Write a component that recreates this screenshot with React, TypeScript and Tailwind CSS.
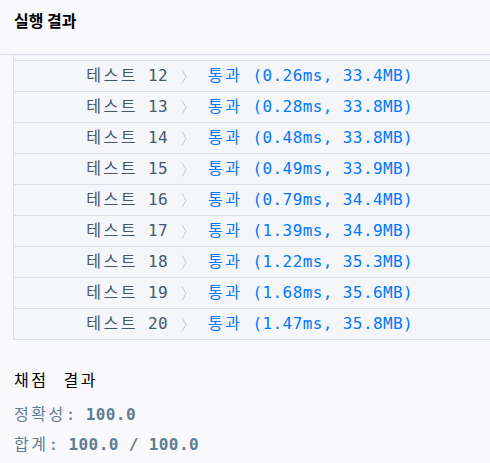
const rows = [
  { n: 12, t: "0.26ms", m: "33.4MB" },
  { n: 13, t: "0.28ms", m: "33.8MB" },
  { n: 14, t: "0.48ms", m: "33.8MB" },
  { n: 15, t: "0.49ms", m: "33.9MB" },
  { n: 16, t: "0.79ms", m: "34.4MB" },
  { n: 17, t: "1.39ms", m: "34.9MB" },
  { n: 18, t: "1.22ms", m: "35.3MB" },
  { n: 19, t: "1.68ms", m: "35.6MB" },
  { n: 20, t: "1.47ms", m: "35.8MB" },
];

const mono = "font-['DejaVu_Sans_Mono','Noto_Sans_CJK_KR',monospace]";

function Ko({ children }: { children: React.ReactNode }) {
  return <span className="tracking-[2.5px]">{children}</span>;
}

export default function App() {
  return (
    <div className="w-[490px] h-[463px] overflow-hidden bg-[#f9f9fc]">
      <div className="h-[55px] border-b border-[#d9dfe8] pl-[14px] pt-[8px]">
        <h2 className="text-[16px] font-bold text-black font-['Noto_Sans_CJK_KR',sans-serif] leading-[24px]">
          실행 결과
        </h2>
      </div>

      <div className={`ml-[13px] border-l border-b border-[#d9dfe8] bg-[#f5f6fa] pt-[5px] ${mono} text-[16px] tracking-[0.4px]`}>
        {rows.map((r) => (
          <div key={r.n} className="h-[31px] border-t border-[#d9dfe8] flex items-center whitespace-nowrap">
            <div className="w-[154px] text-right text-[#44576c]">
              <Ko>테스트</Ko> {r.n}
            </div>
            <div className="w-[40px] flex pl-[13px]">
              <svg width="6" height="15" viewBox="0 0 6 15">
                <path d="M1 0.5 L5 7.5 L1 14.5" fill="none" stroke="#c2c6cd" strokeWidth="1" />
              </svg>
            </div>
            <div className="text-[#0078ff]">
              <Ko>통과</Ko> ({r.t}, {r.m})
            </div>
          </div>
        ))}
      </div>

      <div className={`pl-[14px] pt-[28px] ${mono} text-[16px] tracking-[0.4px]`}>
        <div className="h-[26px] leading-[26px] text-black">
          <Ko>채점</Ko> <span className="ml-[5px]"><Ko>결과</Ko></span>
        </div>
        <div className="mt-[9px] h-[24px] leading-[24px] text-[#5f7d92]">
          <Ko>정확성</Ko>: <span className="font-bold">100.0</span>
        </div>
        <div className="mt-[6px] h-[24px] leading-[24px] text-[#5f7d92]">
          <Ko>합계</Ko>: <span className="font-bold">100.0 / 100.0</span>
        </div>
      </div>
    </div>
  );
}
